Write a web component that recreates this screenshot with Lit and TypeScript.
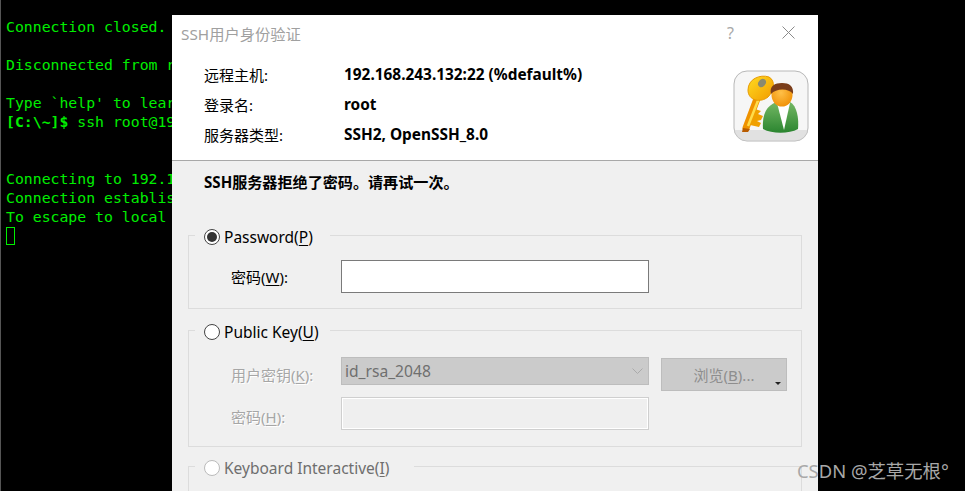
import { LitElement, html, css } from "lit";
import { customElement } from "lit/decorators.js";

@customElement("app-root")
export class AppRoot extends LitElement {
  static styles = css`
    :host { display: block; width: 965px; height: 491px; overflow: hidden; position: relative; background: #000; font-family: "Noto Sans", "Noto Sans CJK SC", sans-serif; }
    .term { width: 172px; height: 100%; box-sizing: border-box; overflow: hidden; padding: 17px 0 0 5px; border-left: 1px solid #555; font: 14.8px/19px "DejaVu Sans Mono", monospace; color: #00ee00; white-space: pre; }
    .term .line { height: 19px; }
    .cursor { display: inline-block; width: 9px; height: 18px; border: 1px solid #00ee00; box-sizing: border-box; vertical-align: -4px; }
    .dialog { position: absolute; left: 172px; top: 15px; width: 646px; height: 476px; background: #f0f0f0; color: #000; font-size: 15px; overflow: hidden; }
    .head { background: #fff; height: 145px; border-bottom: 1px solid #a8a8a8; display: flex; flex-direction: column; }
    .title { display: flex; align-items: center; height: 35px; padding: 0 23px 0 9px; color: #a0a0a0; font-size: 15.3px; }
    .title .t { flex: 1; }
    .help { font-size: 16px; color: #a8a8a8; margin-right: 48px; }
    .info { display: flex; padding: 10px 0 0 32px; }
    .grid { flex: 1; display: grid; grid-template-columns: 140px 1fr; grid-auto-rows: 30px; align-items: center; line-height: 1; }
    .grid b { font-weight: 700; font-size: 15.4px; }
    .logo { width: 76px; height: 72px; margin: 10px 9px 0 0; }
    .msg { font-weight: 700; font-size: 15.1px; margin: 12px 0 0 32px; height: 19px; line-height: 19px; }
    fieldset { margin: 0 16px; border: 1px solid #dcdcdc; padding: 0; min-width: 0; box-sizing: border-box; }
    legend { margin: 0 0 0 6px; padding: 4px 14px 0 9px; box-sizing: border-box; display: flex; align-items: center; gap: 4px; height: 22px; white-space: nowrap; font-size: 15.5px; }
    .g1 legend { padding-right: 17px; }
    .g2 legend { padding-right: 11px; }
    .g3 legend { padding-right: 25px; }
    .radio { width: 16px; height: 16px; border: 1px solid #444; border-radius: 50%; background: #fff; box-sizing: border-box; display: flex; align-items: center; justify-content: center; }
    .radio.on::after { content: ""; width: 10px; height: 10px; border-radius: 50%; background: #333; }
    .radio.off { border-color: #bbb; }
    u { text-underline-offset: 2px; }
    .g1 { margin-top: 32px; height: 85px; }
    .g2 { margin-top: 10px; height: 128px; }
    .g3 { margin-top: 8px; height: 60px; }
    .row { display: grid; grid-template-columns: 110px 308px 12px 126px; padding-left: 42px; align-items: start; line-height: 20px; }
    .g1 .row { margin-top: 14px; align-items: center; }
    .g2 .row.a { margin-top: 16px; }
    .g2 .row.a > .dis { margin-top: 8px; }
    .g2 .row.b { margin-top: 6px; }
    .g2 .row.b > .dis { margin-top: 10px; }
    .input { height: 33px; border: 1px solid #7a7a7a; background: #fff; box-sizing: border-box; }
    .input.off { background: #efefef; border: 1px solid #cfcfcf; box-shadow: inset 0 0 0 1px #fff; }
    .dis { color: #a6a6a6; text-shadow: 1px 1px 0 #fff; }
    .dim { color: #6e6e6e; }
    .select { height: 28px; background: #cbcbcb; border: 1px solid #bdbdbd; box-sizing: border-box; color: #6f6f6f; display: flex; align-items: center; justify-content: space-between; padding: 0 5px 0 3px; font-size: 15.6px; }
    .btn { position: relative; margin-top: 1px; height: 33px; background: #cbcbcb; border: 1px solid #bdbdbd; box-sizing: border-box; color: #8e8e8e; display: flex; align-items: center; justify-content: center; font-size: 15px; }
    .caret { position: absolute; right: 5px; bottom: 5px; width: 0; height: 0; border: 3px solid transparent; border-top: 3px solid #222; border-bottom: 0; }
    .mark { position: absolute; left: 797px; top: 459px; color: #a8a8a8; font-size: 18.4px; white-space: nowrap; line-height: 24px; }
  `;

  logo() {
    const stripes = [];
    for (let y = 4; y < 70; y += 3) stripes.push(html`<rect x="1" y=${y} width="74" height="1" fill="#dcdcdc"/>`);
    return html`<svg class="logo" viewBox="0 0 76 72">
      <defs>
        <linearGradient id="kg" x1="0" y1="0" x2="1" y2="1"><stop offset="0" stop-color="#ffdc20"/><stop offset="1" stop-color="#f29a00"/></linearGradient>
        <linearGradient id="sg" x1="0" y1="0" x2="0" y2="1"><stop offset="0" stop-color="#74b864"/><stop offset="1" stop-color="#2b8530"/></linearGradient>
        <radialGradient id="fg" cx=".45" cy=".4" r=".7"><stop offset="0" stop-color="#ffc048"/><stop offset="1" stop-color="#ee8c00"/></radialGradient>
        <clipPath id="box"><rect x="1" y="1" width="74" height="70" rx="13"/></clipPath>
      </defs>
      <rect x="1" y="1" width="74" height="70" rx="13" fill="#f6f6f6" stroke="#b8b8b8"/>
      <g clip-path="url(#box)">${stripes}<rect x="1" y="60" width="74" height="11" fill="#cfcfcf" opacity=".55"/></g>
      <path d="M13 58 L25 26" stroke="#ef9200" stroke-width="7" stroke-linecap="round"/>
      <path d="M17 55 l9 2 l2 -4 l-4 -2 l4 -1 l2 -4 l-5 -2 l3 -3 l-6 -2 z" fill="#f0a000"/>
      <path d="M15 56 L26 28" stroke="#ffdc4a" stroke-width="2.5"/>
      <path d="M10 58 l-1 4 l6 0 l2 -3 z" fill="#b85c00"/>
      <path d="M15 20 C15 9 27 4 36 7 C43 11 41 21 35 27 C28 33 15 31 15 20 Z" fill="url(#kg)" stroke="#e89a00"/>
      <ellipse cx="29" cy="13" rx="3.5" ry="4.5" transform="rotate(40 29 13)" fill="#8a8a70"/>
      <path d="M30 59 C29 43 34 36 43 32 L57 32 C64 36 66 48 65 59 C56 64 39 64 30 59 Z" fill="url(#sg)"/>
      <path d="M44 33 L51 60 L57 33 Z" fill="#fff"/>
      <ellipse cx="49" cy="25" rx="10.5" ry="11.5" fill="url(#fg)"/>
      <path d="M38 24 C36 16 42 13 49 13 C56 13 61 16 60 24 C56 18 43 18 38 24 Z" fill="#7a3d1a"/>
    </svg>`;
  }

  render() {
    return html`
      <div class="term"><div class="line">Connection closed.</div><div class="line"></div><div class="line">Disconnected from r</div><div class="line"></div><div class="line">Type \`help' to lear</div><div class="line"><b>[C:\\~]$</b> ssh root@192</div><div class="line"></div><div class="line"></div><div class="line">Connecting to 192.1</div><div class="line">Connection establis</div><div class="line">To escape to local </div><div class="line"><span class="cursor"></span></div></div>
      <div class="dialog">
        <div class="head">
          <div class="title"><span class="t">SSH用户身份验证</span><span class="help">?</span>
            <svg width="13" height="13" viewBox="0 0 13 13"><path d="M.5.5l12 12M12.5.5l-12 12" stroke="#8a8a8a" fill="none"/></svg>
          </div>
          <div class="info">
            <div class="grid">
              <span>远程主机:</span><b>192.168.243.132:22 (%default%)</b>
              <span>登录名:</span><b>root</b>
              <span>服务器类型:</span><b>SSH2, OpenSSH_8.0</b>
            </div>
            ${this.logo()}
          </div>
        </div>
        <div class="msg">SSH服务器拒绝了密码。请再试一次。</div>
        <fieldset class="g1">
          <legend><span class="radio on"></span><span>Password(<u>P</u>)</span></legend>
          <div class="row"><span>密码(<u>W</u>):</span><div class="input"></div></div>
        </fieldset>
        <fieldset class="g2">
          <legend><span class="radio"></span><span>Public Key(<u>U</u>)</span></legend>
          <div class="row a"><span class="dis">用户密钥(<u>K</u>):</span>
            <div class="select"><span>id_rsa_2048</span>
              <svg width="11" height="6" viewBox="0 0 11 6"><path d="M.5.5l5 5 5-5" stroke="#aaa" fill="none"/></svg>
            </div><span></span>
            <div class="btn"><span>浏览(<u>B</u>)...</span><span class="caret"></span></div>
          </div>
          <div class="row b"><span class="dis">密码(<u>H</u>):</span><div class="input off"></div></div>
        </fieldset>
        <fieldset class="g3">
          <legend><span class="radio off"></span><span class="dim">Keyboard Interactive(<u>I</u>)</span></legend>
        </fieldset>
      </div>
      <div class="mark">CSDN @芝草无根°</div>
    `;
  }
}
